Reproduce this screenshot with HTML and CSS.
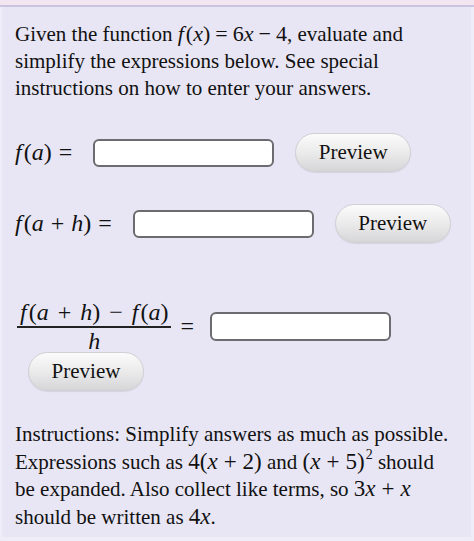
FILE: index.html
```html
<!DOCTYPE html>
<html>
<head>
<meta charset="utf-8">
<link rel="stylesheet" href="styles.css">
</head>
<body>
<div class="topband"></div>
<div class="panel">
  <p class="intro">Given the function <span class="m"><i class="f">f</i>(<i>x</i>)<span class="op">=</span>6<i>x</i><span class="op">−</span>4</span>, evaluate and simplify the expressions below. See special instructions on how to enter your answers.</p>

  <div class="row row1">
    <span class="m label"><i class="f">f</i>(<i>a</i>)<span class="op">=</span></span>
    <span class="input"></span>
    <span class="btn">Preview</span>
  </div>

  <div class="row row2">
    <span class="m label"><i class="f">f</i>(<i>a</i><span class="op">+</span><i>h</i>)<span class="op">=</span></span>
    <span class="input"></span>
    <span class="btn">Preview</span>
  </div>

  <div class="fracrow">
    <span class="frac m">
      <span class="num"><i class="f">f</i>(<i>a</i><span class="op">+</span><i>h</i>)<span class="op">−</span><i class="f">f</i>(<i>a</i>)</span>
      <span class="den"><i>h</i></span>
    </span>
    <span class="m eq">=</span>
    <span class="input"></span>
  </div>
  <div class="btnrow"><span class="btn">Preview</span></div>

  <p class="instr">Instructions: Simplify answers as much as possible. Expressions such as <span class="m">4(<i>x</i><span class="op">+</span>2)</span> and <span class="m">(<i>x</i><span class="op">+</span>5)<sup>2</sup></span> should be expanded. Also collect like terms, so <span class="m">3<i>x</i><span class="op">+</span><i>x</i></span> should be written as <span class="m">4<i>x</i></span>.</p>
</div>
</body>
</html>
```
FILE: styles.css
```css
html, body {
  margin: 0;
  padding: 0;
}
body {
  background: #efedf7;
  font-family: "Liberation Serif", "Times New Roman", serif;
  color: #111;
  width: 474px;
  height: 541px;
  overflow: hidden;
}
.topband {
  height: 5px;
  background: #f4e6f1;
  border-bottom: 2px solid #c9c5e0;
}
.panel {
  margin-left: 2px;
  width: 469px;
  height: 530px;
  background: #e8e6f4;
  padding: 14px 0 0 13px;
  box-sizing: border-box;
}
p {
  margin: 0;
  font-size: 21px;
  line-height: 27px;
}
.intro {
  width: 440px;
}
.m {
  font-family: "Liberation Serif", "Times New Roman", serif;
  white-space: nowrap;
}
.m i {
  font-style: italic;
}
.m i.f {
  margin-right: 2px;
}
.intro .m {
  font-size: 22px;
  line-height: 20px;
}
.intro .op {
  padding: 0 5px;
}
.instr .m {
  font-size: 23px;
  line-height: 20px;
}
.instr .op {
  padding: 0 6px;
}
.row {
  display: flex;
  align-items: center;
}
.row .m, .fracrow .m {
  font-size: 24px;
}
.row .op {
  padding: 0 7px;
}
.fracrow .op {
  padding: 0 9px;
}
.row1 {
  margin-top: 31px;
}
.row2 {
  margin-top: 32px;
}
.label {
  margin-right: 21px;
}
.label .op:last-child {
  padding-right: 0;
}
.input {
  display: block;
  width: 181px;
  height: 28px;
  box-sizing: border-box;
  background: #fff;
  border: 2px solid #6b6b70;
  border-radius: 6px;
}
.btn {
  display: inline-flex;
  align-items: center;
  justify-content: center;
  width: 116px;
  height: 39px;
  box-sizing: border-box;
  border: 1px solid #cfcfd4;
  border-radius: 20px;
  background: linear-gradient(#fbfbfb, #e9e9ea 55%, #d6d6d8);
  font-size: 21px;
  color: #111;
  box-shadow: 0 1px 1px rgba(0,0,0,0.08);
}
.row .btn {
  margin-left: 21px;
}
.fracrow {
  display: flex;
  align-items: center;
  margin-top: 57px;
  padding-left: 2px;
}
.frac {
  display: inline-flex;
  flex-direction: column;
  align-items: center;
}
.num {
  line-height: 24px;
  padding: 0 3px 2px;
  border-bottom: 2px solid #222;
}
.den {
  line-height: 26px;
}
.eq {
  margin: 0 16px 0 9px;
  padding-bottom: 2px;
}
.fracrow .input {
  height: 29px;
  margin-top: -2px;
}
.btnrow {
  display: flex;
  padding-left: 13px;
  margin-top: -2px;
}
.instr {
  margin-top: 30px;
  width: 440px;
  line-height: 27.5px;
}
sup {
  font-size: 14px;
  line-height: 0;
  vertical-align: 10px;
  margin-left: 1px;
}
```
